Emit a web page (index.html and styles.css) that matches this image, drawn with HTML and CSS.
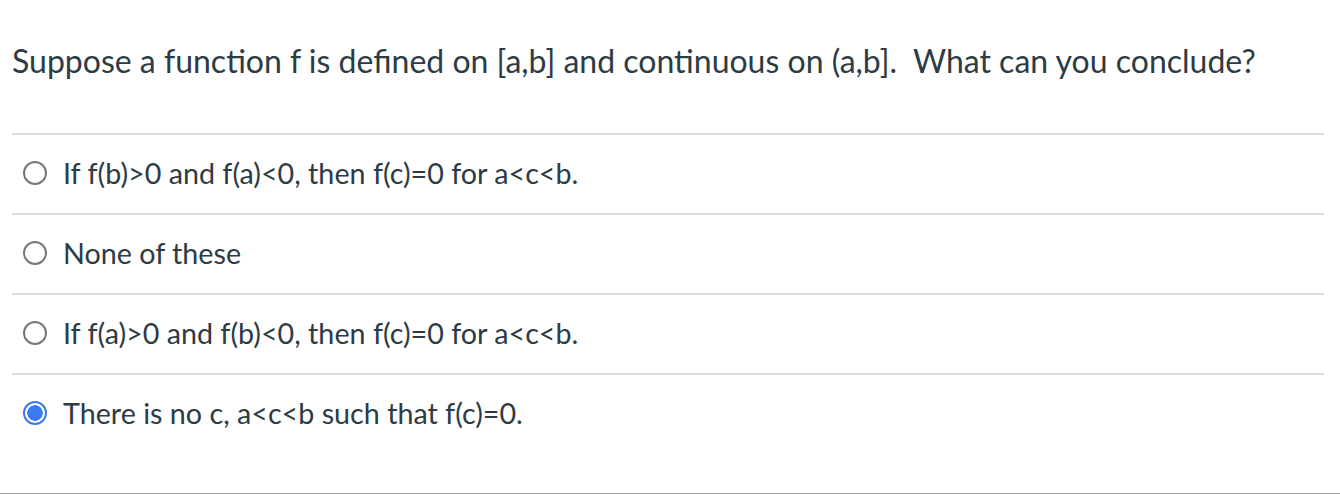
FILE: index.html
```html
<!DOCTYPE html>
<html>
<head>
<meta charset="utf-8">
<link rel="stylesheet" href="styles.css">
</head>
<body>
<div class="question">
  <div class="question-text">Suppose a function f is defined on [a,b] and continuous on (a,b].&nbsp; What can you conclude?</div>
  <div class="answers">
    <label class="answer"><span class="radio"></span><span class="answer-text">If f(b)&gt;0 and f(a)&lt;0, then f(c)=0 for a&lt;c&lt;b.</span></label>
    <label class="answer"><span class="radio"></span><span class="answer-text">None of these</span></label>
    <label class="answer"><span class="radio"></span><span class="answer-text">If f(a)&gt;0 and f(b)&lt;0, then f(c)=0 for a&lt;c&lt;b.</span></label>
    <label class="answer answer-last"><span class="radio radio-checked"></span><span class="answer-text">There is no c, a&lt;c&lt;b such that f(c)=0.</span></label>
  </div>
</div>
</body>
</html>
```
FILE: styles.css
```css
html, body {
  margin: 0;
  padding: 0;
  background: #ffffff;
}
body {
  font-family: Lato, "Noto Sans", sans-serif;
  color: #2d3b45;
  width: 1340px;
  height: 494px;
  overflow: hidden;
}
.question {
  height: 493px;
  border-bottom: 1px solid #a5a5a5;
  padding: 0 16px 0 12px;
}
.question-text {
  font-size: 32px;
  line-height: 40px;
  padding-top: 41px;
  height: 92px;
  border-bottom: 2px solid #dcdcdc;
  box-sizing: content-box;
}
.answers {
  display: flex;
  flex-direction: column;
}
.answer {
  display: flex;
  align-items: center;
  height: 76px;
  padding-bottom: 2px;
  border-bottom: 2px solid #dcdcdc;
  padding-left: 11px;
  gap: 16px;
}
.answer-last {
  border-bottom: none;
}
.answer-text {
  font-size: 28.7px;
  line-height: 34px;
}
.radio {
  width: 24px;
  height: 24px;
  box-sizing: border-box;
  border: 2px solid #777777;
  border-radius: 50%;
  flex: none;
  background: #fff;
}
.radio-checked {
  border: 2.5px solid #3a7af4;
  background: radial-gradient(circle, #3a7af4 0 7.5px, #ffffff 8px);
}
```
